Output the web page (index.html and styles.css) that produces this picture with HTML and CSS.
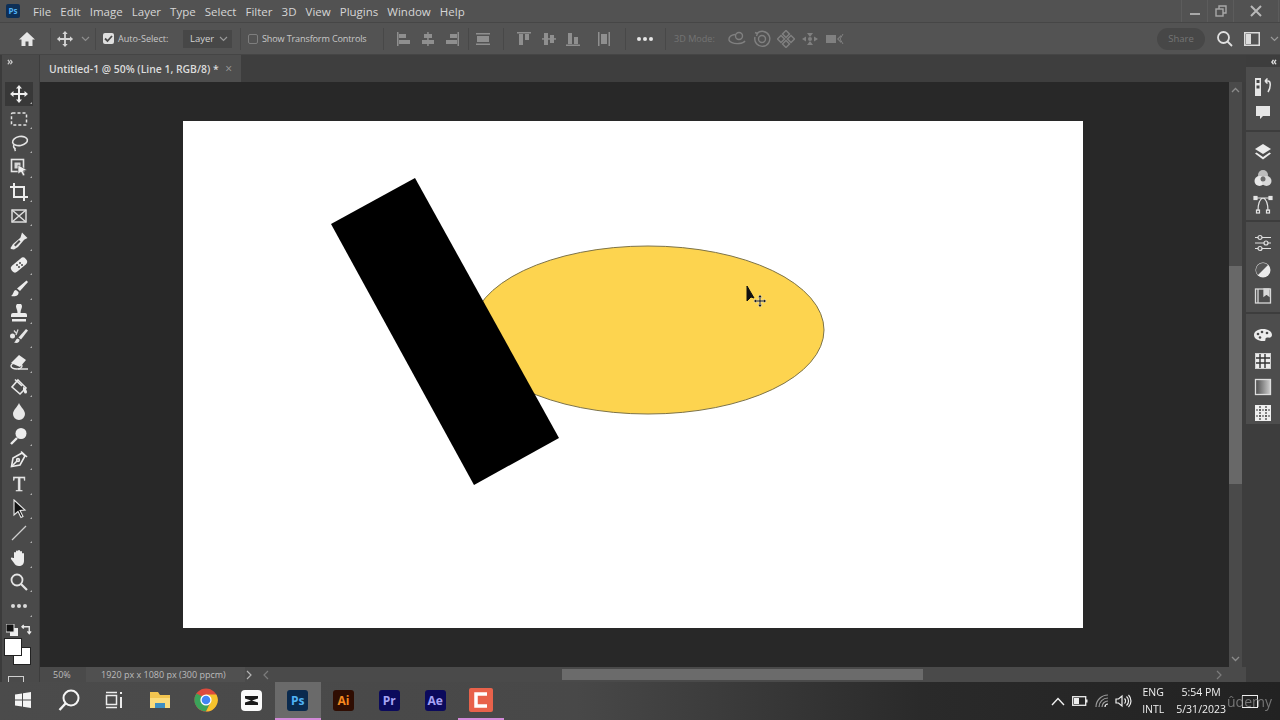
FILE: index.html
```html
<!DOCTYPE html>
<html lang="en">
<head>
  <title>Untitled-1 @ 50% (Line 1, RGB/8) *</title>
  <meta charset="utf-8" />
  <link rel="stylesheet" href="styles.css">
</head>
<body>
  <div class="app">
    <!-- menu bar -->
    <div class="menubar">
      <div class="ps-logo">Ps</div>
      <nav class="menu">
        <span>File</span><span>Edit</span><span>Image</span><span>Layer</span><span>Type</span><span>Select</span><span>Filter</span><span>3D</span><span>View</span><span>Plugins</span><span>Window</span><span>Help</span>
      </nav>
      <div class="winctl">
        <div class="winbtn"><svg width="12" height="12" viewBox="0 0 12 12"><rect x="1" y="8" width="10" height="2" fill="#a8a8a8"/></svg></div>
        <div class="winbtn"><svg width="12" height="12" viewBox="0 0 12 12" fill="none" stroke="#a8a8a8" stroke-width="1.4"><rect x="1" y="4" width="7" height="7"/><path d="M4 4V1h7v7H8"/></svg></div>
        <div class="winbtn winclose"><svg width="12" height="12" viewBox="0 0 12 12" stroke="#b8b8b8" stroke-width="2"><path d="M1 1l10 10M11 1L1 11"/></svg></div>
      </div>
    </div>

    <!-- options bar -->
    <div class="optbar">
      <svg class="o-home" width="18" height="18" viewBox="0 0 18 18" fill="#e6e6e6"><path d="M9 2L1 9.500h2.500V16h4v-4.500h3V16h4V9.500H17z"/></svg>
      <i class="sep s-home"></i>
      <svg class="o-move" width="18" height="18" viewBox="0 0 20 20" fill="#d4d4d4"><path d="M10 1l3 3.500h-2v4.500h4.500v-2L19 10l-3.500 3v-2H11v4.500h2L10 19l-3-3.500h2V11H4.500v2L1 10l3.500-3v2H9V4.500H7z"/></svg>
      <svg class="o-chev" width="9" height="6" viewBox="0 0 9 6" fill="none" stroke="#8e8e8e" stroke-width="1.200"><path d="M1 1l3.500 3.500L8 1"/></svg>
      <i class="sep s-chev"></i>
      <span class="check on"><svg width="11" height="11" viewBox="0 0 11 11" fill="none" stroke="#4a4a4a" stroke-width="1.800"><path d="M2 5.500l2.500 2.500L9 3"/></svg></span>
      <span class="opt-label l-auto">Auto-Select:</span>
      <div class="select">Layer<svg width="9" height="6" viewBox="0 0 9 6" fill="none" stroke="#999" stroke-width="1.200"><path d="M1 1l3.500 3.500L8 1"/></svg></div>
      <i class="sep s-select"></i>
      <span class="check"></span>
      <span class="opt-label l-show">Show Transform Controls</span>
      <i class="sep s-show"></i>
      <div class="aligns a-first">
        <svg width="18" height="18" viewBox="0 0 18 18" fill="#8f8f8f"><rect x="2" y="2" width="1.500" height="14"/><rect x="4" y="4" width="7" height="4"/><rect x="4" y="10" width="11" height="4"/></svg>
        <svg width="18" height="18" viewBox="0 0 18 18" fill="#8f8f8f"><rect x="8.200" y="2" width="1.500" height="14"/><rect x="5" y="4" width="8" height="4"/><rect x="3" y="10" width="12" height="4"/></svg>
        <svg width="18" height="18" viewBox="0 0 18 18" fill="#8f8f8f"><rect x="14.500" y="2" width="1.500" height="14"/><rect x="7" y="4" width="7" height="4"/><rect x="3" y="10" width="11" height="4"/></svg>
      </div>
      <i class="sep s-al1"></i>
      <svg class="o-dist" width="18" height="18" viewBox="0 0 18 18" fill="#8f8f8f"><rect x="2" y="3" width="14" height="1.500"/><rect x="2" y="13.500" width="14" height="1.500"/><rect x="3" y="6" width="12" height="6"/></svg>
      <i class="sep s-al2"></i>
      <div class="aligns a-second">
        <svg width="18" height="18" viewBox="0 0 18 18" fill="#8f8f8f"><rect x="2" y="2" width="14" height="1.500"/><rect x="4" y="4" width="4" height="11"/><rect x="10" y="4" width="4" height="6"/></svg>
        <svg width="18" height="18" viewBox="0 0 18 18" fill="#8f8f8f"><rect x="2" y="8.200" width="14" height="1.500"/><rect x="4" y="3" width="4" height="12"/><rect x="10" y="5" width="4" height="8"/></svg>
        <svg width="18" height="18" viewBox="0 0 18 18" fill="#8f8f8f"><rect x="2" y="14.500" width="14" height="1.500"/><rect x="4" y="3" width="4" height="11"/><rect x="10" y="7" width="4" height="7"/></svg>
      </div>
      <svg class="o-dist2" width="18" height="18" viewBox="0 0 18 18" fill="#8f8f8f"><rect x="3" y="2" width="1.500" height="14"/><rect x="13.500" y="2" width="1.500" height="14"/><rect x="6" y="4" width="6" height="10"/></svg>
      <i class="sep s-al3"></i>
      <div class="dots"><b></b><b></b><b></b></div>
      <i class="sep s-dots"></i>
      <span class="opt-label mode3d">3D Mode:</span>
      <div class="icons3d">
        <svg width="20" height="18" viewBox="0 0 20 18" fill="none" stroke="#808080" stroke-width="1.400"><circle cx="12" cy="6" r="3.500"/><path d="M8 4.500C4 5 1.500 7 2 10c.5 2 4 4 10 3.500 3-.3 5-1 6-2.500"/></svg>
        <svg width="18" height="18" viewBox="0 0 18 18" fill="none" stroke="#808080" stroke-width="1.400"><circle cx="9" cy="9" r="3.500"/><path d="M4 3.500A7.500 7.500 0 1 1 2 7"/><path d="M2 2.500l2.500 1L3.500 6"/></svg>
        <svg width="18" height="18" viewBox="0 0 18 18" fill="none" stroke="#808080" stroke-width="1.400"><rect x="6.500" y="1.500" width="5" height="5" transform="rotate(45 9 4)"/><rect x="6.500" y="11.500" width="5" height="5" transform="rotate(45 9 14)"/><rect x="1.500" y="6.500" width="5" height="5" transform="rotate(45 4 9)"/><rect x="11.500" y="6.500" width="5" height="5" transform="rotate(45 14 9)"/></svg>
        <svg width="18" height="18" viewBox="0 0 18 18" fill="#808080"><circle cx="9" cy="9" r="2" /><path d="M6 3h6L9 7zM6 15h6L9 11zM1 9l4-2.500v5zM17 9l-4-2.500v5z"/></svg>
        <svg width="20" height="18" viewBox="0 0 20 18" fill="#808080"><rect x="1" y="5" width="10" height="8"/><path d="M12 9l4-4v1.500L13.500 9l2.500 2.500V13z"/><path d="M18 4l-3 5 3 5" fill="none" stroke="#808080"/></svg>
      </div>
      <div class="optright">
        <div class="share">Share</div>
        <svg width="18" height="18" viewBox="0 0 18 18" fill="none" stroke="#e0e0e0" stroke-width="1.800"><circle cx="7.500" cy="7.500" r="5.500"/><path d="M11.500 11.500L16 16"/></svg>
        <svg width="16" height="14" viewBox="0 0 16 14"><rect x=".75" y=".75" width="14.500" height="12.500" fill="none" stroke="#dcdcdc" stroke-width="1.500"/><rect x="2" y="2" width="5" height="10" fill="#dcdcdc"/></svg>
        <svg width="9" height="6" viewBox="0 0 9 6" fill="none" stroke="#999" stroke-width="1.200"><path d="M1 1l3.500 3.500L8 1"/></svg>
      </div>
    </div>

    <div class="workspace">
      <!-- left tools -->
      <aside class="toolbar">
        <div class="collapse">&#187;</div>
        <div class="tools">
          <div class="tool active"><svg width="20" height="20" viewBox="0 0 20 20" fill="#efefef"><path d="M10 1l3 3.500h-2v4.500h4.500V7L19 10l-3.500 3v-2H11v4.500h2L10 19l-3-3.500h2V11H4.500v2L1 10l3.500-3v2H9V4.500H7z"/></svg></div>
          <div class="tool"><svg width="20" height="20" viewBox="0 0 20 20" fill="none" stroke="#e4e4e4" stroke-width="1.500" stroke-dasharray="3 2"><rect x="2.500" y="4" width="15" height="12" rx="1"/></svg></div>
          <div class="tool"><svg width="20" height="20" viewBox="0 0 20 20" fill="none" stroke="#e4e4e4" stroke-width="1.600"><ellipse cx="11" cy="8" rx="7.500" ry="4.500" transform="rotate(-10 11 8)"/><path d="M5 12c-1 1.500 0 3 1 3.500-.3 1 0 1.800.5 2.500"/></svg></div>
          <div class="tool"><svg width="20" height="20" viewBox="0 0 20 20"><rect x="2.500" y="2.500" width="12" height="12" fill="none" stroke="#e4e4e4" stroke-width="1.600"/><rect x="5.500" y="5.500" width="6" height="6" fill="#d6d6d6"/><path d="M9 8l9 5-4 1 2 4-2 1-2-4-3 2z" fill="#efefef" stroke="#4a4a4a" stroke-width=".6"/></svg></div>
          <div class="tool"><svg width="20" height="20" viewBox="0 0 20 20" fill="none" stroke="#ececec" stroke-width="2"><path d="M5 1v14h14M1 5h14v14"/></svg></div>
          <div class="tool"><svg width="20" height="20" viewBox="0 0 20 20" fill="none" stroke="#dcdcdc" stroke-width="1.500"><rect x="3" y="4" width="14" height="12"/><path d="M3 4l14 12M17 4L3 16"/></svg></div>
          <div class="tool"><svg width="20" height="20" viewBox="0 0 20 20" fill="#e8e8e8"><path d="M13 1.500l5.500 5.500-3 1.500-1 1L9 16l-4 2.500L2 18l-.5-1 2.500-4 6.500-5.500 1-1z"/><path d="M5 14l5-5 1.500 1.500-5 5z" fill="#4a4a4a"/></svg></div>
          <div class="tool"><svg width="20" height="20" viewBox="0 0 20 20"><rect x="1" y="6" width="18" height="8" rx="3.500" transform="rotate(-40 10 10)" fill="#ececec"/><g fill="#4a4a4a"><circle cx="8" cy="10" r="1"/><circle cx="11" cy="8" r="1"/><circle cx="10" cy="12" r="1"/><circle cx="13" cy="10" r="1"/></g></svg></div>
          <div class="tool"><svg width="20" height="20" viewBox="0 0 20 20" fill="#ececec"><path d="M17.500 1.500L19 3l-8 9-3-2.500z"/><path d="M7 11c-3 .5-2 4-5 6 4 1 8 0 7.500-4z"/></svg></div>
          <div class="tool"><svg width="20" height="20" viewBox="0 0 20 20" fill="#ececec"><path d="M7 2.500a3 3 0 0 1 6 0c0 2-1.500 3-1.500 6.500H16a2 2 0 0 1 2 2v2H2v-2a2 2 0 0 1 2-2h4.500C8.500 5.500 7 4.500 7 2.500z"/><rect x="3" y="15" width="14" height="2.500"/></svg></div>
          <div class="tool"><svg width="20" height="20" viewBox="0 0 20 20" fill="#e6e6e6"><path d="M17 1l2 1.500-7 9-2.500-2z"/><path d="M8.500 10.500c-2 .5-1.500 3-3.500 4 3 1 6 0 5.500-3z"/><path d="M9 1.500L7 7M5 2.500L7 5" stroke="#d8d8d8" stroke-width="1.300" fill="none"/><circle cx="3.500" cy="8" r="2.500"/></svg></div>
          <div class="tool"><svg width="20" height="20" viewBox="0 0 20 20"><path d="M2 11l8-8 7 5-6 7z" fill="#ececec"/><ellipse cx="7.500" cy="14" rx="5.500" ry="3" fill="none" stroke="#ececec" stroke-width="1.400"/><path d="M9 17h10" stroke="#ececec" stroke-width="1.400"/></svg></div>
          <div class="tool"><svg width="20" height="20" viewBox="0 0 20 20"><path d="M9 3l8 8-6 6-8-7z" fill="none" stroke="#e8e8e8" stroke-width="1.600"/><path d="M6 2.500L13 9" stroke="#e8e8e8" stroke-width="1.600"/><path d="M14 10c2 0 4 3 4 5a1.500 1.500 0 0 1-3 0c0-1-.5-2-1-2z" fill="#ececec"/></svg></div>
          <div class="tool"><svg width="20" height="20" viewBox="0 0 20 20" fill="#e8e8e8"><path d="M10 2c1.500 4 6 7 6 11a6 6 0 0 1-12 0c0-4 4.500-7 6-11z"/></svg></div>
          <div class="tool"><svg width="20" height="20" viewBox="0 0 20 20"><circle cx="12" cy="7.500" r="5.500" fill="#ececec"/><path d="M8 12l-6 6" stroke="#ececec" stroke-width="2.400"/></svg></div>
          <div class="tool"><svg width="20" height="20" viewBox="0 0 20 20" fill="none" stroke="#ececec" stroke-width="1.600"><path d="M13 3L4 8l-1.500 8.500L11 15l5-9z"/><path d="M3 16l5-5"/><circle cx="9" cy="10" r="1.400"/><path d="M12 1.500l6 5.500"/></svg></div>
          <div class="tool"><span class="type-t">T</span></div>
          <div class="tool"><svg width="20" height="20" viewBox="0 0 20 20"><path d="M5 1l11 10-5 .5 3 6-2 1-3-6-4 3.500z" fill="#111" stroke="#e8e8e8" stroke-width="1.100"/></svg></div>
          <div class="tool"><svg width="20" height="20" viewBox="0 0 20 20"><path d="M3 17L17 3" stroke="#cfcfcf" stroke-width="1.300"/></svg></div>
          <div class="tool"><svg width="20" height="20" viewBox="0 0 20 20" fill="#ececec"><path d="M5 10V5a1 1 0 0 1 2 0V3.500a1 1 0 0 1 2 0V3a1 1 0 0 1 2 0v1a1 1 0 0 1 2 0v2a1 1 0 0 1 2 0v7c0 3-2 5-5 5-2.500 0-4-1-5-3L2 11c-.5-1 .8-2 1.800-1z"/></svg></div>
          <div class="tool"><svg width="20" height="20" viewBox="0 0 20 20" fill="none" stroke="#e4e4e4" stroke-width="1.800"><circle cx="8" cy="8" r="5.500"/><path d="M12 12l6 6" stroke-width="2.200"/></svg></div>
          <div class="tool"><div class="tool-more"><b></b><b></b><b></b></div></div>
        </div>
        <div class="swatches">
          <div class="chips">
            <svg width="12" height="12" viewBox="0 0 12 12"><rect x="4" y="4" width="8" height="8" fill="#eee"/><rect x="0" y="0" width="8" height="8" fill="#111" stroke="#ddd"/></svg>
            <svg width="11" height="11" viewBox="0 0 12 12" fill="none" stroke="#e8e8e8" stroke-width="1.500"><path d="M1 3h8v7M7 8l2 2.500L11 8M3 1L1 3l2 2"/></svg>
          </div>
          <div class="color-pair"><div class="swatch fg"></div><div class="swatch bg"></div></div>
          <div class="quickmask"></div>
        </div>
      </aside>

      <!-- document area -->
      <main class="center">
        <div class="tabstrip">
          <div class="doctab"><span>Untitled-1 @ 50% (Line 1, RGB/8) *</span><em>&#215;</em></div>
        </div>
        <div class="middle">
          <div class="pasteboard">
            <svg class="document" width="900" height="507" viewBox="0 0 900 507">
              <rect width="900" height="507" fill="#fff"/>
              <ellipse cx="465" cy="209" rx="176" ry="84" fill="#fdd44f" stroke="#7d7348" stroke-width="1"/>
              <polygon points="232,57 148,103 291,364 376,317" fill="#000"/>
              <path d="M564 165v15l4-4 3 1z" fill="#111" stroke="#111" stroke-width="1"/>
              <path transform="translate(570 173) scale(.7)" d="M10 1l3 3.500h-2v4.500h4.500V7L19 10l-3.500 3v-2H11v4.500h2L10 19l-3-3.500h2V11H4.500v2L1 10l3.500-3v2H9V4.500H7z" fill="#111" stroke="#fff" stroke-width=".6"/>
            </svg>
          </div>
          <div class="vscroll">
            <svg width="9" height="6" viewBox="0 0 9 6" fill="none" stroke="#8c8c8c" stroke-width="1.300"><path d="M1 5l3.500-3.500L8 5"/></svg>
            <div class="vthumb"></div>
            <svg width="9" height="6" viewBox="0 0 9 6" fill="none" stroke="#8c8c8c" stroke-width="1.300"><path d="M1 1l3.500 3.500L8 1"/></svg>
          </div>
          <div class="dockgap"></div>
        </div>
        <div class="statusbar">
          <span class="zoom-val">50%</span>
          <div class="status-info">1920 px x 1080 px (300 ppcm)</div>
          <svg class="st-next" width="6" height="10" viewBox="0 0 6 10" fill="none" stroke="#b4b4b4" stroke-width="1.200"><path d="M1 1l4 4-4 4"/></svg>
          <svg class="st-prev" width="6" height="10" viewBox="0 0 6 10" fill="none" stroke="#7c7c7c" stroke-width="1.200"><path d="M5 1L1 5l4 4"/></svg>
          <div class="hthumb"></div>
          <svg class="st-end" width="6" height="10" viewBox="0 0 6 10" fill="none" stroke="#7c7c7c" stroke-width="1.200"><path d="M1 1l4 4-4 4"/></svg>
        </div>
      </main>

      <!-- right dock -->
      <aside class="dock">
        <div class="collapse right">&#171;</div>
        <div class="dockgroup g1">
          <svg width="20" height="20" viewBox="0 0 20 20"><rect x="2" y="1" width="6" height="18" fill="#e6e6e6"/><g fill="#444"><rect x="3.500" y="3" width="3" height="3"/><rect x="3.500" y="8.500" width="3" height="3"/></g><path d="M12 4h3c3 0 3 6 0 11M12 4l2.500-2.500M12 4l2.500 2.500" fill="none" stroke="#e6e6e6" stroke-width="1.500"/></svg>
          <svg width="18" height="18" viewBox="0 0 18 18" fill="#e6e6e6"><path d="M2 3h14v10H9l-3 3v-3H2z"/></svg>
        </div>
        <div class="dockgroup g2">
          <svg width="20" height="20" viewBox="0 0 20 20" fill="#ececec"><path d="M10 2l8 5-8 5-8-5z"/><path d="M3.500 10.500L2 11.500l8 6 8-6-1.500-1L10 15z"/></svg>
          <svg width="20" height="20" viewBox="0 0 20 20"><circle cx="10" cy="7" r="5" fill="#bdbdbd"/><circle cx="6.500" cy="13" r="5" fill="#e8e8e8"/><circle cx="13.500" cy="13" r="5" fill="#d8d8d8"/><circle cx="10" cy="11" r="2.500" fill="#6c6c6c"/></svg>
          <svg width="20" height="20" viewBox="0 0 20 20" fill="none" stroke="#e4e4e4" stroke-width="1.200"><path d="M3 4h14M5 17c0-8 2-12 5-13 3 1 5 5 5 13"/><g fill="#e4e4e4"><rect x="1" y="2.500" width="3" height="3"/><rect x="16" y="2.500" width="3" height="3"/></g><rect x="3.500" y="16" width="3" height="3"/><rect x="13.500" y="16" width="3" height="3"/></svg>
        </div>
        <div class="dockgroup g3">
          <svg width="20" height="18" viewBox="0 0 20 18" fill="none" stroke="#e0e0e0" stroke-width="1.200"><path d="M2 3.500h16M2 9h16M2 14.500h16"/><circle cx="7" cy="3.500" r="2" fill="#555"/><circle cx="13" cy="9" r="2" fill="#555"/><circle cx="7" cy="14.500" r="2" fill="#555"/></svg>
          <svg width="18" height="18" viewBox="0 0 18 18"><circle cx="9" cy="9" r="7.500" fill="#ececec"/><path d="M14 4A7 7 0 0 0 4 14z" fill="#555"/></svg>
          <svg width="18" height="18" viewBox="0 0 18 18" fill="none" stroke="#d8d8d8" stroke-width="1.300"><rect x="1.500" y="2" width="15" height="14"/><path d="M4 2v14"/><path d="M10 2h5v7l-2.500-2L10 9z" fill="#d8d8d8"/></svg>
        </div>
        <div class="dockgroup g4">
          <svg width="20" height="18" viewBox="0 0 20 18"><path d="M10 3c5 0 9 2.500 9 6 0 2-2 3-4 2.500-2-.5-3 1-2.500 2.500C12.500 15 11 15 10 15c-5 0-9-2.500-9-6s4-6 9-6z" fill="#ececec"/><g fill="#4a4a4a"><circle cx="5" cy="8" r="1.300"/><circle cx="9" cy="6" r="1.300"/><circle cx="14" cy="7" r="1.300"/><circle cx="7" cy="11.500" r="1.300"/></g></svg>
          <svg width="18" height="18" viewBox="0 0 18 18"><rect x="1.500" y="1.500" width="15" height="15" fill="#ececec" stroke="#cfcfcf"/><path d="M6 2v14M11 2v14M2 6h14M2 11h14" stroke="#333" stroke-width="1.400"/></svg>
          <svg width="18" height="18" viewBox="0 0 18 18"><defs><linearGradient id="grad" x1="0" x2="1" y1="0" y2="0"><stop offset="0" stop-color="#4a4a4a"/><stop offset="1" stop-color="#cfcfcf"/></linearGradient></defs><rect x="1.500" y="1.500" width="15" height="15" fill="url(#grad)" stroke="#dedede" stroke-width="1.300"/></svg>
          <svg width="18" height="18" viewBox="0 0 18 18"><rect x="1" y="1" width="16" height="16" fill="#efefef"/><path d="M2 6h14M2 12h14M6 2v14M12 2v14" stroke="#3c3c3c" stroke-width="1.200" stroke-dasharray="2 1"/></svg>
        </div>
      </aside>
    </div>

    <!-- windows taskbar -->
    <footer class="taskbar">
      <div class="task"><svg width="18" height="18" viewBox="0 0 18 18" fill="#f4f4f4"><path d="M1 3.500l7-1v6H1zM9 2.300L17 1v7.500H9zM1 9.500h7v6l-7-1zM9 9.500h8V17l-8-1.300z"/></svg></div>
      <div class="task"><svg width="24" height="24" viewBox="0 0 24 24" fill="none" stroke="#f4f4f4" stroke-width="2"><circle cx="14" cy="10" r="7.500"/><path d="M8.500 15.500L2.500 22" stroke-width="2.400"/></svg></div>
      <div class="task"><svg width="20" height="20" viewBox="0 0 20 20" fill="none" stroke="#ececec" stroke-width="1.500"><path d="M2 2.500h11M2 17.500h11"/><rect x="2.500" y="5.500" width="10" height="9"/><path d="M17 2v2M17 7v11" stroke-width="2"/></svg></div>
      <div class="task"><svg width="22" height="20" viewBox="0 0 22 20"><path d="M1 2h8l2 3h10v13H1z" fill="#f2c550"/><rect x="1" y="8" width="20" height="10" fill="#fbdc7c"/><rect x="6" y="13" width="10" height="5" fill="#3d8fc4"/></svg></div>
      <div class="task"><svg width="24" height="24" viewBox="0 0 24 24"><circle cx="12" cy="12" r="11.500" fill="#dd4b3d"/><path d="M2.500 5.500A11.500 11.500 0 0 0 12 23.500L17 13z" fill="#3ba35a"/><path d="M12 6.500h10.400A11.500 11.500 0 0 1 12 23.500l5-10z" fill="#f6c32c"/><circle cx="12" cy="12" r="5.600" fill="#fff"/><circle cx="12" cy="12" r="4.300" fill="#4285f4"/></svg></div>
      <div class="task"><svg width="21" height="21" viewBox="0 0 21 21"><rect width="21" height="21" rx="4" fill="#fafafa"/><path d="M4 6h13v2.500L11 10.500l6 2v2.500H4v-2.500l6-2-6-2z" fill="#1a1a1a"/></svg></div>
      <div class="task active"><div class="appicon ps">Ps</div></div>
      <div class="task"><div class="appicon ai">Ai</div></div>
      <div class="task"><div class="appicon pr">Pr</div></div>
      <div class="task"><div class="appicon ae">Ae</div></div>
      <div class="task running"><svg width="24" height="24" viewBox="0 0 24 24"><rect width="24" height="24" rx="2" fill="#e8624b"/><path d="M18 6H7v12h11" fill="none" stroke="#fff" stroke-width="3.500"/></svg></div>

      <div class="tray">
        <svg width="14" height="9" viewBox="0 0 14 9" fill="none" stroke="#f0f0f0" stroke-width="1.400"><path d="M1 8l6-6.500L13 8"/></svg>
        <svg width="16" height="12" viewBox="0 0 16 12"><rect x=".7" y="1.700" width="13" height="8.600" fill="none" stroke="#eee" stroke-width="1.300"/><rect x="2" y="3" width="5" height="6" fill="#eee"/><rect x="14" y="4.500" width="1.500" height="3" fill="#eee"/></svg>
        <svg width="16" height="14" viewBox="0 0 16 14" fill="none" stroke="#9a9a9a" stroke-width="1.200"><path d="M1 13A12 12 0 0 1 13 1M4 13a9 9 0 0 1 9-9M7 13a6 6 0 0 1 6-6" /><path d="M10 13a3 3 0 0 1 3-3" stroke="#eee"/></svg>
        <svg class="tr-vol" width="17" height="14" viewBox="0 0 17 14" fill="none" stroke="#eee" stroke-width="1.200"><path d="M1 5h2.500L7 2v10L3.500 9H1z"/><path d="M9.500 4.500a3.500 3.500 0 0 1 0 5M11.500 2.500a6 6 0 0 1 0 9M13.500 1a8.500 8.500 0 0 1 0 12"/></svg>
        <div class="lang">ENG<br>INTL</div>
        <div class="clock">5:54 PM<br>5/31/2023</div>
        <div class="notif"></div>
      </div>
      <span class="udemy">ûdemy</span>
    </footer>
  </div>
</body>
</html>
```

FILE: styles.css
```css
*{
  box-sizing: border-box;
}
html,body{
  margin: 0;
  padding: 0;
  overflow: hidden;
  background: #282828;
}
.app{
  display: flex;
  flex-direction: column;
  width: 1280px;
  height: 720px;
  font-family: "Open Sans", "Liberation Sans", sans-serif;
  color: #d2d2d2;
  filter: blur(0.4px);
}

/* menu bar */
.menubar{
  display: flex;
  align-items: center;
  flex: 0 0 23px;
  padding-left: 6px;
  background: #525252;
  border-bottom: 1px solid #464646;
}
.ps-logo{
  width: 14px;
  height: 14px;
  border-radius: 2px;
  background: #0d2f56;
  color: #4fb2f5;
  font-size: 8px;
  font-weight: 700;
  line-height: 14px;
  text-align: center;
}
.menu{
  display: flex;
  gap: 9.050px;
  margin-left: 13px;
  font-size: 11.500px;
  color: #d6d6d6;
}
.winctl{
  display: flex;
  margin-left: auto;
  margin-right: 1px;
  height: 100%;
}
.winbtn{
  display: flex;
  align-items: center;
  justify-content: center;
  width: 26px;
  height: 100%;
  border-left: 1px solid #5c5c5c;
}
.winclose{
  width: 46px;
  border-right: 1px solid #5c5c5c;
}

/* options bar */
.optbar{
  display: flex;
  align-items: center;
  flex: 0 0 32px;
  padding-left: 18px;
  background: #535353;
  border-bottom: 1px solid #454545;
}
.sep{
  flex: none;
  width: 1px;
  height: 22px;
  background: #484848;
}
.o-home{ margin-right: 23px; }
.s-home{ margin-left: -9px; }
.o-move{ margin-left: 5px; }
.o-chev{ margin-left: 7px; }
.s-chev{ margin-left: 5px; }
.check{
  display: flex;
  align-items: center;
  justify-content: center;
  flex: none;
  width: 10px;
  height: 10px;
  margin-left: 6px;
  border: 1px solid #7e7e7e;
  border-radius: 2px;
}
.check.on{
  width: 11px;
  height: 11px;
  margin-left: 7px;
  border: 0;
  background: #dfdfdf;
}
.opt-label{
  font-size: 9.100px;
  white-space: nowrap;
  color: #c8c8c8;
}
.l-auto{ margin-left: 4px; width: 60px; }
.l-show{ margin-left: 4px; width: 121px; letter-spacing: -0.15px; }
.select{
  display: flex;
  align-items: center;
  justify-content: space-between;
  flex: none;
  width: 49px;
  height: 18px;
  padding: 0 4px 0 7px;
  margin-left: 5px;
  background: #474747;
  font-size: 9.500px;
}
.s-select{ margin-left: 8px; margin-right: 1px; }
.s-show{ margin-right: 11px; }
.aligns{
  display: flex;
  gap: 6px;
  flex: none;
}
.s-al1{ margin-left: 7px; }
.o-dist{ margin-left: 5px; }
.s-al2{ margin-left: 11px; }
.a-second{ margin-left: 11px; gap: 6.500px; }
.o-dist2{ margin-left: 13px; }
.s-al3{ margin-left: 11.500px; }
.dots{
  display: flex;
  gap: 2px;
  margin-left: 11px;
}
.dots b{
  width: 4px;
  height: 4px;
  border-radius: 50%;
  background: #e6e6e6;
}
.s-dots{ margin-left: 12px; }
.mode3d{
  margin-left: 8.500px;
  width: 44px;
  color: #737373;
}
.icons3d{
  display: flex;
  gap: 6px;
  margin-left: 9px;
  align-items: center;
}
.optright{
  display: flex;
  align-items: center;
  margin-left: auto;
  margin-right: 1px;
  gap: 10px;
}
.share{
  width: 48px;
  height: 22px;
  margin-right: 1px;
  border-radius: 11px;
  background: #474747;
  color: #757575;
  font-size: 9.500px;
  line-height: 22px;
  text-align: center;
}

/* main row */
.workspace{
  display: flex;
  flex: 1;
  min-height: 0;
}
.toolbar{
  display: flex;
  flex-direction: column;
  flex: 0 0 40px;
  padding-left: 5px;
  padding-right: 4px;
  background: #4a4a4a;
  border-left: 2px solid #3b3b3b;
  border-right: 1px solid #3d3d3d;
  overflow: hidden;
}
.collapse{
  flex: none;
  height: 27px;
  font-size: 10px;
  font-weight: 700;
  line-height: 12px;
  color: #c8c8c8;
}
.tools{
  display: flex;
  flex-direction: column;
  flex: none;
}
.tool{
  position: relative;
  display: flex;
  align-items: center;
  justify-content: center;
  flex: none;
  width: 28px;
  height: 24.400px;
  margin-left: -2px;
}
.tool::after{
  content: "";
  position: absolute;
  right: 1px;
  bottom: 2px;
  border: 1.500px solid transparent;
  border-right-color: #b0b0b0;
  border-bottom-color: #b0b0b0;
}
.tool.active{
  background: #383838;
}
.type-t{
  font-family: "Liberation Serif", serif;
  font-size: 20px;
  font-weight: 400;
  color: #e6e6e6;
  -webkit-text-stroke: 0.5px #e6e6e6;
}
.tool-more{
  display: flex;
  gap: 2px;
}
.tool-more b{
  width: 4px;
  height: 4px;
  border-radius: 50%;
  background: #dadada;
}
.swatches{
  flex: none;
  margin-top: 5px;
  margin-left: -3px;
}
.chips{
  display: flex;
  justify-content: space-between;
  width: 28px;
  padding-left: 2px;
}
.color-pair{
  position: relative;
  height: 32px;
  margin-top: 2px;
}
.swatch{
  position: absolute;
  width: 18px;
  height: 18px;
  background: #fff;
  border: 1px solid #222;
}
.fg{ left: 0; top: 0; z-index: 1; }
.bg{ left: 9px; top: 9px; }
.quickmask{
  width: 16px;
  height: 10px;
  margin: 6px 0 0 4px;
  border: 1px solid #cfcfcf;
}
.center{
  display: flex;
  flex-direction: column;
  flex: 1;
  min-width: 0;
  background: #3d3d3d;
}
.tabstrip{
  flex: 0 0 27px;
  background: #3e3e3e;
}
.doctab{
  display: flex;
  align-items: center;
  justify-content: space-between;
  width: 201px;
  height: 27px;
  padding: 0 9px 0 9px;
  background: #4e4e4e;
  font-size: 10.400px;
  font-weight: 600;
  white-space: nowrap;
  color: #dcdcdc;
}
.doctab em{
  font-style: normal;
  font-size: 12px;
  font-weight: 400;
  color: #9a9a9a;
}
.middle{
  display: flex;
  flex: 1;
  min-height: 0;
}
.pasteboard{
  display: flex;
  align-items: center;
  justify-content: center;
  flex: 1;
  padding-right: 3px;
  background: #282828;
}
.document{
  display: block;
  flex: none;
}
.vscroll{
  display: flex;
  flex-direction: column;
  align-items: center;
  justify-content: space-between;
  flex: 0 0 13px;
  padding: 5px 0;
  background: #4a4a4a;
}
.vthumb{
  width: 100%;
  height: 218px;
  background: #686868;
}
.dockgap{
  flex: 0 0 4px;
  background: #3d3d3d;
}
.statusbar{
  position: relative;
  display: flex;
  align-items: center;
  flex: 0 0 15px;
  background: #4a4a4a;
  font-size: 9px;
  color: #bcbcbc;
}
.zoom-val{
  width: 46px;
  padding-left: 13px;
}
.status-info{
  width: 159px;
  padding-left: 15px;
  background: #505050;
  white-space: nowrap;
  line-height: 15px;
}
.st-next{ margin-left: 1px; }
.st-prev{ margin-left: 11px; }
.hthumb{
  width: 361px;
  height: 11px;
  margin-left: 293px;
  background: #6b6b6b;
}
.st-end{ margin-left: 293px; }
.dock{
  display: flex;
  flex-direction: column;
  flex: 0 0 34px;
  background: #3d3d3d;
}
.collapse.right{
  height: 12px;
  padding-right: 3px;
  text-align: right;
  color: #e0e0e0;
}
.dockgroup{
  display: flex;
  flex-direction: column;
  align-items: center;
  flex: none;
  margin-bottom: 2px;
  padding-top: 10px;
  background: #4d4d4d;
}
.g1{ height: 63px; gap: 6px; }
.g2{ height: 88px; gap: 6px; }
.g3{ height: 90px; gap: 8.500px; padding-top: 12px; }
.g4{ height: 110px; gap: 8px; padding-top: 12px; }

/* taskbar */
.taskbar{
  position: relative;
  display: flex;
  align-items: stretch;
  flex: 0 0 38px;
  background: linear-gradient(90deg, #4b4b4b 0%, #484848 45%, #2a2a2a 72%, #222 100%);
}
.task{
  display: flex;
  align-items: center;
  justify-content: center;
  flex: 0 0 45.800px;
  border-bottom: 2px solid transparent;
}
.task.active{
  background: #6a6a6a;
  border-bottom-color: #d38ad8;
}
.task.running{
  border-bottom-color: #d38ad8;
}
.appicon{
  width: 21px;
  height: 21px;
  border-radius: 3px;
  font-size: 12px;
  font-weight: 700;
  line-height: 21px;
  text-align: center;
}
.ps{ background: #0a2a4e; color: #4fb2f5; }
.ai{ background: #2f0d02; color: #f58a1f; }
.pr{ background: #0b0a5c; color: #a6a4f5; }
.ae{ background: #0b0a5c; color: #a6a4f5; }
.tray{
  display: flex;
  align-items: center;
  margin-left: auto;
  padding-right: 22px;
  gap: 7px;
}
.tr-vol{ margin-left: -3px; }
.lang,.clock{
  font-size: 10.500px;
  line-height: 17px;
  text-align: center;
  color: #f0f0f0;
}
.lang{ margin-left: 3px; }
.clock{ margin-left: 5px; }
.notif{
  width: 16px;
  height: 13px;
  margin-left: 9px;
  border: 1.300px solid #eee;
}
.udemy{
  position: absolute;
  right: 8px;
  top: 10px;
  font-size: 14px;
  color: #8b8b8b;
  opacity: 0.8;
}
```
